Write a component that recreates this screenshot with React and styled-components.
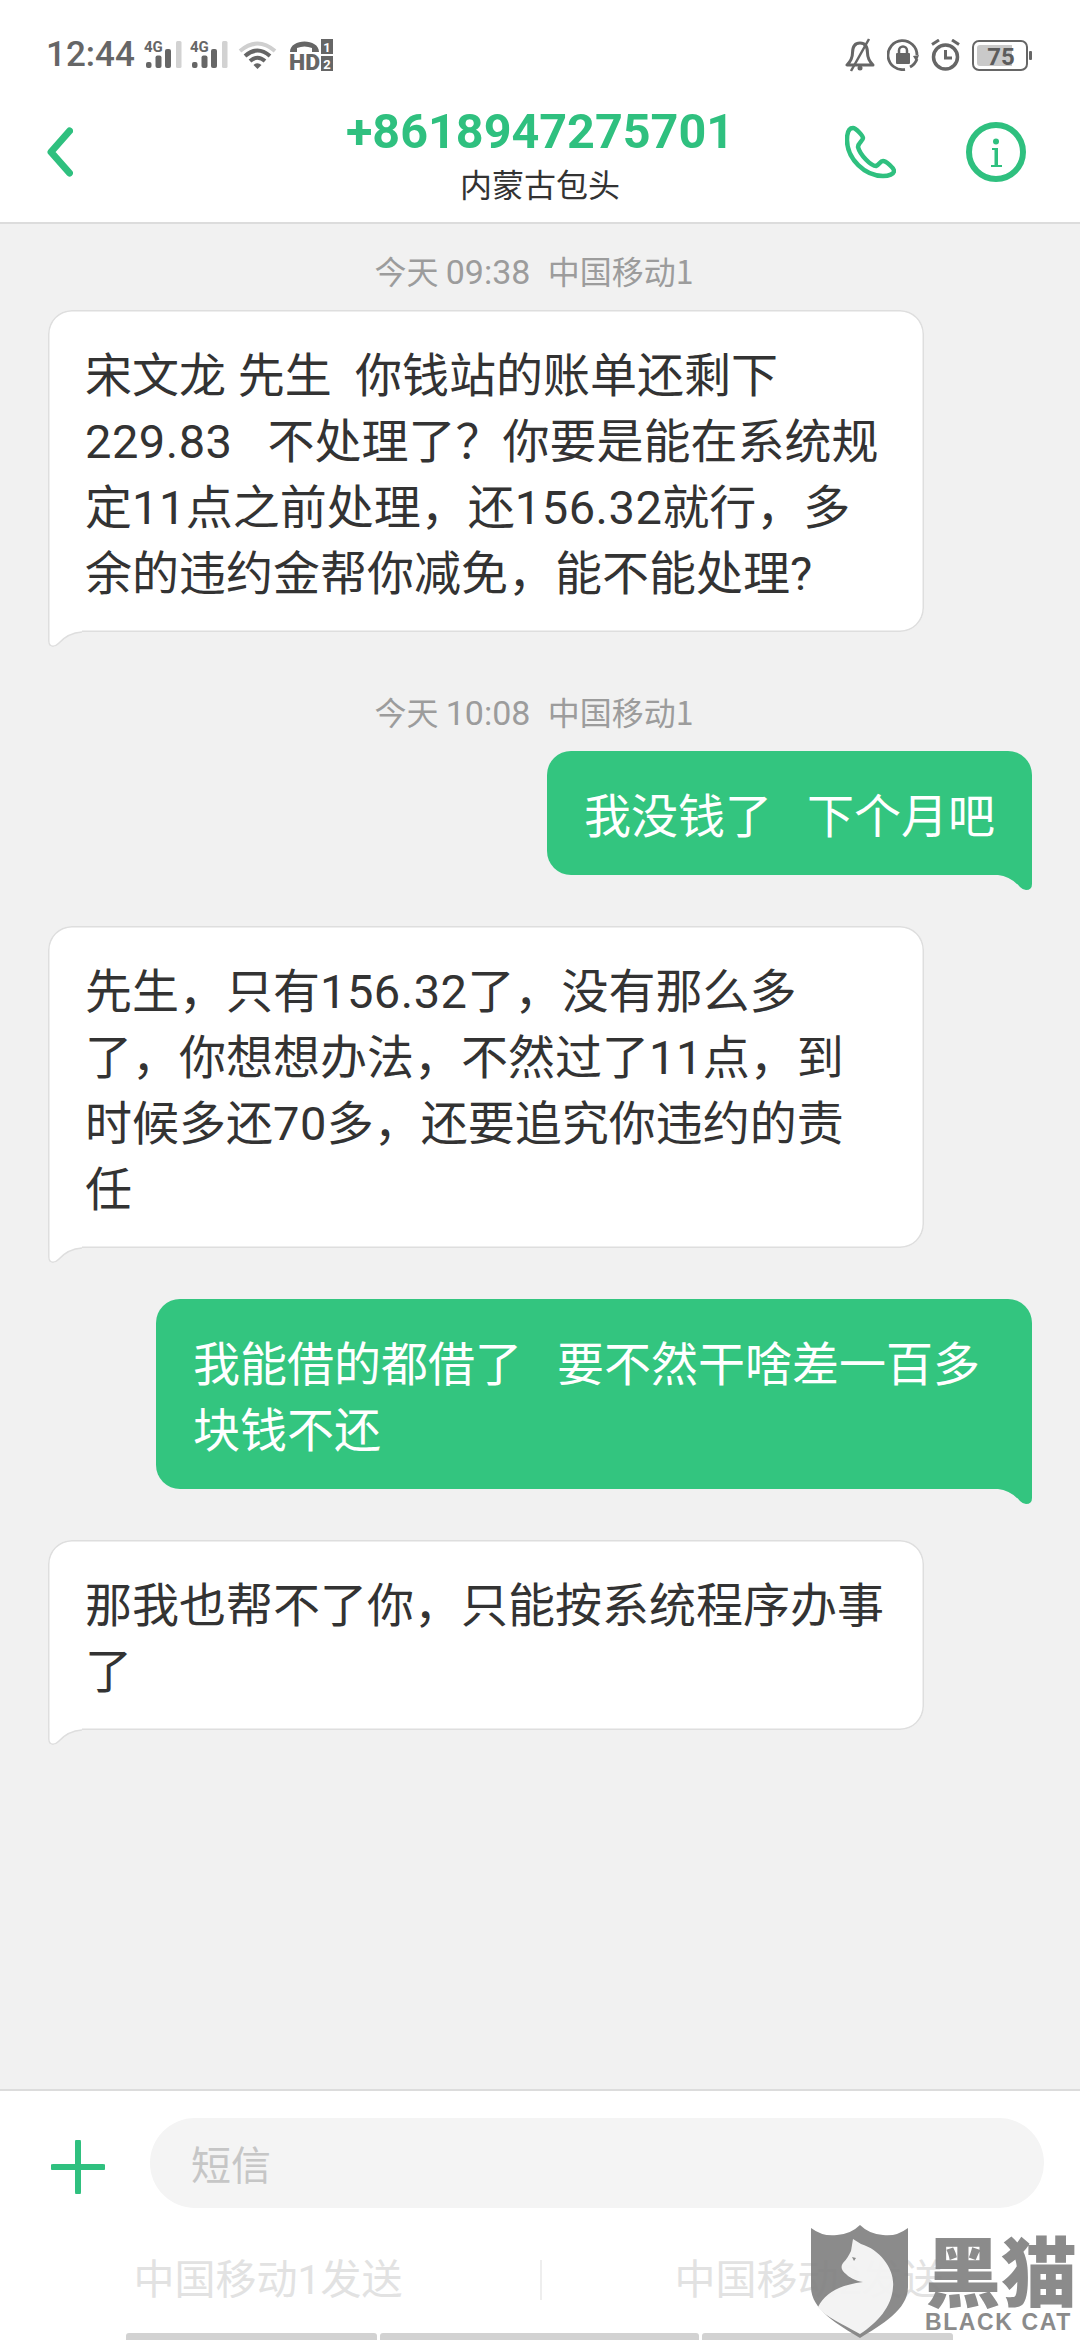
import React from "react";
import styled, { createGlobalStyle } from "styled-components";

const GREEN = "#2fc07f";
const BUBBLE_GREEN = "#33c57f";
const ICON_GREY = "#666666";

const Global = createGlobalStyle`
  html, body { margin: 0; padding: 0; background: #f1f1f1; }
  * { box-sizing: border-box; }
  body { font-family: Roboto, "Noto Sans CJK SC", sans-serif; }
`;

const Page = styled.div`
  position: relative;
  width: 1080px;
  height: 2340px;
  overflow: hidden;
  display: flex;
  flex-direction: column;
  background: #f1f1f1;
`;

const Header = styled.header`
  background: #fff;
  border-bottom: 2px solid #dcdcdc;
  height: 224px;
  flex: none;
`;

const StatusBar = styled.div`
  height: 81px;
  padding: 29px 48px 0 46px;
  display: flex;
  align-items: center;
  justify-content: space-between;
`;

const StatusGroup = styled.div`
  display: flex;
  align-items: center;
  gap: ${(p) => p.$gap || 10}px;
`;

const Clock = styled.span`
  font-family: Roboto, sans-serif;
  font-size: 35px;
  font-weight: 500;
  color: #666;
  line-height: 40px;
  width: 88px;
`;

const Nav = styled.nav`
  height: 141px;
  display: grid;
  grid-template-columns: 1fr auto 1fr;
  padding: 0 47px;
`;

const NavSide = styled.div`
  display: flex;
  align-items: center;
  justify-content: ${(p) => (p.$end ? "flex-end" : "flex-start")};
  padding-right: ${(p) => (p.$end ? 7 : 0)}px;
  gap: 70px;
  height: 142px;
`;

const TitleBlock = styled.div`
  padding-top: 23px;
  text-align: center;
`;

const Number = styled.div`
  font-family: Roboto, sans-serif;
  font-weight: 700;
  font-size: 48.5px;
  line-height: 56px;
  color: ${GREEN};
`;

const Region = styled.div`
  margin-top: 3px;
  font-family: "Noto Sans CJK SC", sans-serif;
  font-size: 32px;
  line-height: 40px;
  color: #333;
`;

const Thread = styled.main`
  flex: 1;
  padding: 18px 48px 0;
  display: flex;
  flex-direction: column;
  gap: 51px;
`;

const Group = styled.section`
  display: flex;
  flex-direction: column;
  gap: 19px;
  padding-top: 9px;
`;

const Stamp = styled.div`
  height: 40px;
  line-height: 38px;
  text-align: center;
  padding-right: 12px;
  font-family: "Noto Sans CJK SC", sans-serif;
  font-size: 32px;
  color: #9c9c9c;
  white-space: pre;
`;

const StampTime = styled.span`
  font-family: Roboto, sans-serif;
  font-size: 34px;
`;

const StampCarrier = styled.span`
  margin-left: 3px;
`;

const Bubble = styled.div`
  position: relative;
  align-self: ${(p) => (p.$sent ? "flex-end" : "flex-start")};
  max-width: 876px;
  width: ${(p) => (p.$fit ? "fit-content" : "876px")};
  padding: 33px 37px 25px;
  font-family: Roboto, "Noto Sans CJK SC", sans-serif;
  font-size: 47px;
  line-height: 66px;
  white-space: pre-wrap;
  color: ${(p) => (p.$sent ? "#fff" : "#333")};
  background: ${(p) => (p.$sent ? BUBBLE_GREEN : "#fff")};
  border-radius: 24px;
  border-bottom-left-radius: ${(p) => (p.$sent ? "24px" : "0")};
  border-bottom-right-radius: ${(p) => (p.$sent ? "0" : "24px")};
  box-shadow: ${(p) => (p.$sent ? "none" : "inset 0 0 0 1.5px #dedede")};
`;

const Figure = styled.span`
  letter-spacing: 0.5px;
`;

const TailSvg = styled.svg`
  position: absolute;
  top: calc(100% - 2px);
  ${(p) => (p.$sent ? "right: 0;" : "left: 0;")}
  display: block;
`;

const Tail = ({ sent }) =>
  sent ? (
    <TailSvg $sent width="34" height="18" viewBox="0 0 34 18">
      <path d="M0 0 H34 V11 Q34 17 28 17 Q25 17 22 14 Q12 3 0 2 Z" fill={BUBBLE_GREEN} />
    </TailSvg>
  ) : (
    <TailSvg width="34" height="18" viewBox="0 0 34 18">
      <path d="M0 0 H34 V2 Q20 3 11 13 Q8 17 5 17 Q0 17 0 11 Z" fill="#fff" />
      <path d="M.8 0 V11 Q.8 16.2 5 16.2 Q8 16.2 11 13 Q20 3 34 2" fill="none" stroke="#dedede" strokeWidth="1.5" />
    </TailSvg>
  );

const Message = ({ sent, fit, children }) => (
  <Bubble $sent={sent} $fit={fit}>
    {children}
    <Tail sent={sent} />
  </Bubble>
);

const Composer = styled.footer`
  flex: none;
  height: 251px;
  background: #fff;
  border-top: 2px solid #dcdcdc;
`;

const InputRow = styled.div`
  display: flex;
  align-items: center;
  gap: 45px;
  padding: 27px 36px 0 51px;
`;

const PlusIcon = styled.svg`
  flex: none;
  margin-top: 8px;
`;

const Field = styled.div`
  flex: 1;
  height: 90px;
  border-radius: 45px;
  background: #f4f4f4;
  padding: 0 41px;
  display: flex;
  align-items: center;
  font-family: "Noto Sans CJK SC", sans-serif;
  font-size: 40px;
  color: #c6c6c6;
`;

const SimRow = styled.div`
  margin-top: 52px;
  display: grid;
  grid-template-columns: 1fr 1fr;
`;

const SimLabel = styled.div`
  height: 40px;
  line-height: 40px;
  text-align: center;
  padding-right: 4px;
  font-family: Roboto, "Noto Sans CJK SC", sans-serif;
  font-size: 41px;
  color: #e2e2e2;
  border-left: ${(p) => (p.$divided ? "2px solid #eeeeee" : "none")};
`;

const NavBars = styled.div`
  margin-top: 33px;
  display: flex;
  gap: 3px;
  padding-left: 126px;
`;

const NavBar = styled.div`
  width: ${(p) => p.$w}px;
  height: 7px;
  background: #d2d2d2;
  border-radius: 3px 3px 0 0;
`;

const Watermark = styled.div`
  position: absolute;
  left: 811px;
  top: 2225px;
  display: flex;
  gap: 17px;
  opacity: 0.95;
`;

const BrandText = styled.div`
  display: flex;
  flex-direction: column;
  padding-top: 1px;
`;

const BrandCn = styled.div`
  font-family: "Noto Sans CJK SC", sans-serif;
  font-weight: 900;
  font-size: 76px;
  line-height: 84px;
  color: #858585;
  white-space: nowrap;
`;

const BrandEn = styled.div`
  font-family: "Liberation Sans", sans-serif;
  font-weight: 700;
  font-size: 23px;
  line-height: 24px;
  letter-spacing: 1.6px;
  color: #858585;
  white-space: nowrap;
`;

const SignalSvg = styled.svg`
  display: block;
  margin-top: -4px;
`;

const Signal = () => (
  <SignalSvg width="38" height="34" viewBox="0 -4 38 34">
    <text x="0" y="11.500" fontFamily="Roboto, sans-serif" fontWeight="700" fontSize="15" fill={ICON_GREY}>4G</text>
    <rect x="2" y="22" width="5.500" height="6" rx="2" fill={ICON_GREY} />
    <rect x="11.500" y="15.500" width="6" height="12.500" rx="2" fill={ICON_GREY} />
    <rect x="21" y="9" width="6" height="19" rx="2" fill={ICON_GREY} />
    <rect x="32" y="1" width="5.500" height="27" rx="1.500" fill="#d2d2d2" />
  </SignalSvg>
);

const Wifi = () => (
  <svg width="39" height="30" viewBox="0 0 39 30" fill="none">
    <path d="M2 11 Q19.500 -4 37 11" stroke="#cfcfcf" strokeWidth="4" />
    <path d="M7 16 Q19.500 5 32 16" stroke={ICON_GREY} strokeWidth="4" />
    <path d="M12 21 Q19.500 14.500 27 21" stroke={ICON_GREY} strokeWidth="4" />
    <path d="M15.500 25 Q19.500 21.500 23.500 25 L19.500 29 Z" fill={ICON_GREY} />
  </svg>
);

const HdSvg = styled.svg`
  display: block;
  margin-left: 2px;
`;

const HdCall = () => (
  <HdSvg width="44" height="32" viewBox="0 0 44 32">
    <path d="M1 13 C1 -1 30 -1 30 13 L23 13 L23 9 C18 7 13 7 8 9 L8 13 Z" fill={ICON_GREY} />
    <text x="0" y="31" fontFamily="Roboto, sans-serif" fontWeight="900" fontSize="22" fill={ICON_GREY} textLength="31" lengthAdjust="spacingAndGlyphs">HD</text>
    <rect x="32" y="0" width="12" height="15" fill={ICON_GREY} />
    <rect x="32" y="17" width="12" height="15" fill={ICON_GREY} />
    <text x="38" y="12.500" textAnchor="middle" fontFamily="Roboto, sans-serif" fontWeight="700" fontSize="13" fill="#fff">1</text>
    <text x="38" y="29.500" textAnchor="middle" fontFamily="Roboto, sans-serif" fontWeight="700" fontSize="13" fill="#fff">2</text>
  </HdSvg>
);

const Bell = () => (
  <svg width="30" height="34" viewBox="0 0 30 34" fill="none">
    <path d="M15 5 C9 5 7.500 10 7.500 15 C7.500 20 5 24 2 27 H28 C25 24 22.500 20 22.500 15 C22.500 10 21 5 15 5 Z" stroke={ICON_GREY} strokeWidth="3" strokeLinejoin="round" />
    <path d="M24 1 L6 33" stroke={ICON_GREY} strokeWidth="2.500" />
    <circle cx="15" cy="30" r="2.500" fill={ICON_GREY} />
  </svg>
);

const RotationLock = () => (
  <svg width="32" height="32" viewBox="0 0 32 32" fill="none">
    <path d="M30 16 A14.500 14.500 0 1 0 18 30.400" stroke={ICON_GREY} strokeWidth="2.800" />
    <path d="M23 28 A14.500 14.500 0 0 0 30 20" stroke={ICON_GREY} strokeWidth="2.800" />
    <path d="M26 17 L32 16 L29.500 23 Z" fill={ICON_GREY} />
    <rect x="9" y="14" width="14" height="11" rx="1" fill={ICON_GREY} />
    <path d="M12 14 V11.500 A4 4 0 0 1 20 11.500 V14" stroke={ICON_GREY} strokeWidth="2.500" />
  </svg>
);

const Alarm = () => (
  <svg width="29" height="32" viewBox="0 0 29 32" fill="none">
    <circle cx="14.500" cy="18" r="12" stroke={ICON_GREY} strokeWidth="3.500" />
    <path d="M14.500 11 V19 H21" stroke={ICON_GREY} strokeWidth="3" />
    <path d="M1 5.500 L8 1" stroke={ICON_GREY} strokeWidth="3" />
    <path d="M28 5.500 L21 1" stroke={ICON_GREY} strokeWidth="3" />
  </svg>
);

const Battery = () => (
  <svg width="60" height="31" viewBox="0 0 60 31" fill="none">
    <rect x="1" y="1" width="54" height="29" rx="6" stroke={ICON_GREY} strokeWidth="2" />
    <path d="M5 8 Q5 5 8 5 H40 V26 H8 Q5 26 5 23 Z" fill="#c9c9c9" />
    <rect x="57" y="11" width="3" height="9" rx="1" fill={ICON_GREY} />
    <text x="29" y="24.500" textAnchor="middle" fontFamily="Roboto, sans-serif" fontWeight="700" fontSize="24" fill="#5c5c5c">75</text>
  </svg>
);

const BackChevron = () => (
  <svg width="26" height="50" viewBox="0 0 26 50" fill="none">
    <path d="M22.500 4 L4 25 L22.500 46" stroke={GREEN} strokeWidth="7" strokeLinecap="round" strokeLinejoin="round" />
  </svg>
);

const PhoneIcon = () => (
  <svg width="51" height="54" viewBox="0 0 51 54" fill="none">
    <path d="M8 3 C4 3 2 8 2 15 C2 34 20 51 38 51 C44 51 49 49 49 46 C49 43 41 36 38 36 C35 36 34 40 31 41 C26 41 15 30 13 22 C13 18 18 16 18 13 C18 11 11 3 8 3 Z" stroke={GREEN} strokeWidth="4.500" strokeLinejoin="round" />
  </svg>
);

const InfoIcon = () => (
  <svg width="60" height="60" viewBox="0 0 60 60" fill="none">
    <circle cx="30" cy="30" r="27" stroke={GREEN} strokeWidth="6" />
    <circle cx="30" cy="19.500" r="3" fill={GREEN} />
    <path d="M26 26 H32 V43 H36 V45 H25 V43 H28.500 V28 H26 Z" fill={GREEN} />
  </svg>
);

const Plus = () => (
  <PlusIcon width="54" height="54" viewBox="0 0 54 54" fill="none">
    <path d="M27 2 V52 M2 27 H52" stroke={GREEN} strokeWidth="6" strokeLinecap="round" />
  </PlusIcon>
);

const Shield = () => (
  <svg width="97" height="114" viewBox="0 0 97 114">
    <path d="M0 3 Q12 12 26 10 Q40 9 49 0 Q58 9 72 10 Q85 12 97 3 L97 62 C97 85 70 100 49 113 C28 100 0 85 0 62 Z" fill="#858585" />
    <path d="M42 14 L50 19 C70 25 84 45 82 62 C81 82 66 98 49 109 C32 99 14 92 7 82 C14 68 28 60 52 57 C44 56 38 52 35 49 C31 46 29 42 32 38 C36 34 38 30 40 26 Z" fill="#fff" fillOpacity="0.9" />
    <path d="M41 32 L45 33 L43 36 Z" fill="#858585" />
  </svg>
);

export default function App() {
  return (
    <Page>
      <Global />
      <Header>
        <StatusBar>
          <StatusGroup>
            <Clock>12:44</Clock>
            <StatusGroup $gap={8}>
              <Signal />
              <Signal />
            </StatusGroup>
            <Wifi />
            <HdCall />
          </StatusGroup>
          <StatusGroup $gap={12}>
            <Bell />
            <RotationLock />
            <Alarm />
            <Battery />
          </StatusGroup>
        </StatusBar>
        <Nav>
          <NavSide>
            <BackChevron />
          </NavSide>
          <TitleBlock>
            <Number>+8618947275701</Number>
            <Region>内蒙古包头</Region>
          </TitleBlock>
          <NavSide $end>
            <PhoneIcon />
            <InfoIcon />
          </NavSide>
        </Nav>
      </Header>
      <Thread>
        <Group>
          <Stamp>今天 <StampTime>09:38</StampTime>  <StampCarrier>中国移动1</StampCarrier></Stamp>
          <Message>
            宋文龙 先生  你钱站的账单还剩下{"\n"}
            <Figure>229.83</Figure>   不处理了？你要是能在系统规{"\n"}
            定<Figure>11</Figure>点之前处理，还<Figure>156.32</Figure>就行，多{"\n"}
            余的违约金帮你减免，能不能处理?
          </Message>
        </Group>
        <Group>
          <Stamp>今天 <StampTime>10:08</StampTime>  <StampCarrier>中国移动1</StampCarrier></Stamp>
          <Message sent fit>我没钱了   下个月吧</Message>
        </Group>
        <Message>
          先生，只有<Figure>156.32</Figure>了，没有那么多{"\n"}
          了，你想想办法，不然过了<Figure>11</Figure>点，到{"\n"}
          时候多还<Figure>70</Figure>多，还要追究你违约的责{"\n"}
          任
        </Message>
        <Message sent>{"我能借的都借了   要不然干啥差一百多\n块钱不还"}</Message>
        <Message>{"那我也帮不了你，只能按系统程序办事\n了"}</Message>
      </Thread>
      <Composer>
        <InputRow>
          <Plus />
          <Field>短信</Field>
        </InputRow>
        <SimRow>
          <SimLabel>中国移动1发送</SimLabel>
          <SimLabel $divided>中国移动2发送</SimLabel>
        </SimRow>
        <NavBars>
          <NavBar $w={251} />
          <NavBar $w={319} />
          <NavBar $w={251} />
        </NavBars>
      </Composer>
      <Watermark>
        <Shield />
        <BrandText>
          <BrandCn>黑猫</BrandCn>
          <BrandEn>BLACK CAT</BrandEn>
        </BrandText>
      </Watermark>
    </Page>
  );
}
